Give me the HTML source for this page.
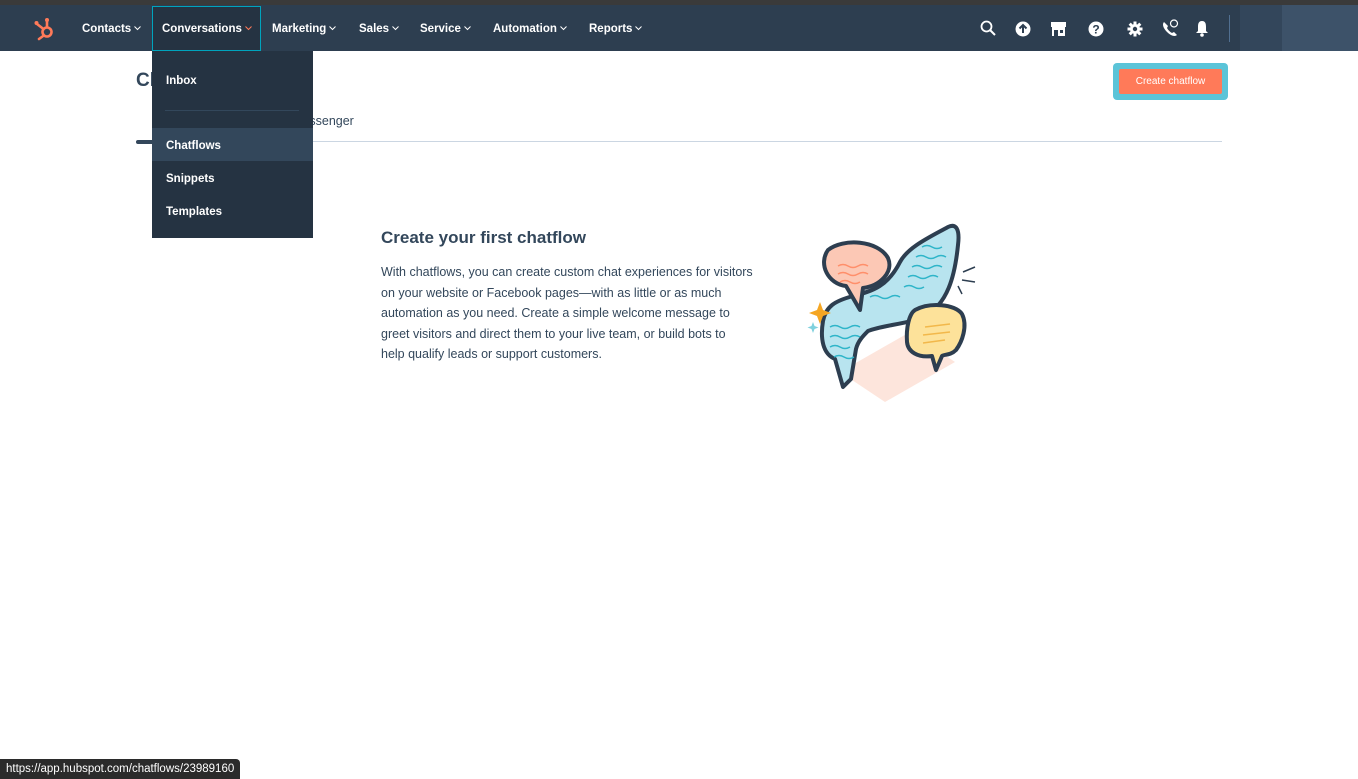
<!DOCTYPE html>
<html><head><meta charset="utf-8">
<style>
*{box-sizing:border-box;margin:0;padding:0}
body{width:1358px;height:779px;overflow:hidden;background:#fff;font-family:"Liberation Sans",sans-serif;color:#33475b;position:relative}
.top{position:absolute;left:0;top:0;width:1358px;height:5px;background:#3a3a3a}
.nav{position:absolute;left:0;top:5px;width:1358px;height:46px;background:#2d3e50}
.nav .r{position:absolute;left:1240px;top:0;width:118px;height:46px;background:#33465b}
.nav .r2{position:absolute;left:1282px;top:0;width:76px;height:46px;background:#3d5269}
.item{position:absolute;top:0;height:46px;line-height:49px;color:#fff;font-size:11.5px;font-weight:bold;white-space:nowrap}
.item svg{margin-left:3px;vertical-align:middle}
.conv{position:absolute;left:152px;top:6px;width:109px;height:45px;border:1.5px solid #00a4bd;background:#253342}
.menu{position:absolute;left:152px;top:51px;width:161px;height:187px;background:#253342}
.menu div{position:absolute;left:14px;color:#fff;font-size:11.5px;font-weight:bold}
.icon{position:absolute}
.btnwrap{position:absolute;left:1113px;top:63px;width:115px;height:37px;background:#5bc4d8;border-radius:4px}
.btn{position:absolute;left:1119px;top:69px;width:103px;height:25px;background:#ff7a59;color:#fff;font-size:10px;text-align:center;line-height:25px;border-radius:2px}
h2{position:absolute;left:381px;top:228px;font-size:17px;font-weight:bold;color:#33475b}
p.d{position:absolute;left:381px;top:262px;font-size:12.5px;line-height:20.5px;color:#33475b;white-space:nowrap}
.status{position:absolute;left:0;top:759px;height:20px;padding:0 6px;background:#2b2b2b;color:#fff;font-size:11.5px;line-height:20px;border-top-right-radius:4px}
</style></head><body>
<div class="top"></div>
<div class="nav"><div class="r"></div><div class="r2"></div>
<svg style="position:absolute;left:33px;top:10px" width="24" height="28" viewBox="0 0 24 28"><g stroke="#ff7a59" stroke-width="2.6" fill="none" stroke-linecap="round"><circle cx="14" cy="17" r="4.5"/><line x1="14" y1="12" x2="14" y2="6"/><line x1="10.5" y1="14" x2="4" y2="9"/><line x1="10.8" y1="20.5" x2="6" y2="24"/></g><circle cx="14" cy="5" r="2" fill="#ff7a59"/><circle cx="3.5" cy="8" r="2" fill="#ff7a59"/></svg>
<div class="item" style="left:82px">Contacts<svg width="7" height="5"><path d="M.5.5L3.5 3.5 6.5.5" stroke="#fff" fill="none"/></svg></div>
<div class="item" style="left:272px">Marketing<svg width="7" height="5"><path d="M.5.5L3.5 3.5 6.5.5" stroke="#fff" fill="none"/></svg></div>
<div class="item" style="left:359px">Sales<svg width="7" height="5"><path d="M.5.5L3.5 3.5 6.5.5" stroke="#fff" fill="none"/></svg></div>
<div class="item" style="left:420px">Service<svg width="7" height="5"><path d="M.5.5L3.5 3.5 6.5.5" stroke="#fff" fill="none"/></svg></div>
<div class="item" style="left:493px">Automation<svg width="7" height="5"><path d="M.5.5L3.5 3.5 6.5.5" stroke="#fff" fill="none"/></svg></div>
<div class="item" style="left:589px">Reports<svg width="7" height="5"><path d="M.5.5L3.5 3.5 6.5.5" stroke="#fff" fill="none"/></svg></div>
<svg class="icon" style="left:980px;top:15px" width="16" height="16"><circle cx="6.5" cy="6.5" r="5" stroke="#fff" stroke-width="1.8" fill="none"/><line x1="10" y1="10" x2="15" y2="15" stroke="#fff" stroke-width="2"/></svg>
<svg class="icon" style="left:1015px;top:16px" width="16" height="16"><circle cx="8" cy="8" r="7.5" fill="#fff"/><path d="M8 12V4M4.5 7.5L8 4l3.5 3.5" stroke="#2d3e50" stroke-width="2" fill="none"/></svg>
<svg class="icon" style="left:1050px;top:16px" width="17" height="16"><rect x="1" y="1" width="15" height="5" fill="#fff"/><rect x="2" y="6" width="13" height="9" fill="#fff"/><rect x="4" y="9" width="4" height="6" fill="#2d3e50"/><rect x="10" y="9" width="3" height="3" fill="#2d3e50"/></svg>
<svg class="icon" style="left:1088px;top:16px" width="16" height="16"><circle cx="8" cy="8" r="7.5" fill="#fff"/><text x="8" y="12.5" text-anchor="middle" font-size="12" font-weight="bold" fill="#2d3e50" font-family="Liberation Sans">?</text></svg>
<svg class="icon" style="left:1127px;top:16px" width="16" height="16" viewBox="0 0 16 16"><g stroke="#fff" stroke-width="3" stroke-linecap="butt"><line x1="8" y1="0.5" x2="8" y2="15.5"/><line x1="0.5" y1="8" x2="15.5" y2="8"/><line x1="2.7" y1="2.7" x2="13.3" y2="13.3"/><line x1="13.3" y1="2.7" x2="2.7" y2="13.3"/></g><circle cx="8" cy="8" r="5" fill="#fff"/><circle cx="8" cy="8" r="2.2" fill="#2d3e50"/></svg>
<svg class="icon" style="left:1161px;top:14px" width="18" height="18" viewBox="0 0 18 18"><path d="M3 3c-2 2-1 6 3 10s8 5 10 3l-3-3-2 1c-2-1-4-3-5-5l1-2z" fill="#fff"/><circle cx="13" cy="4.5" r="3.5" stroke="#fff" stroke-width="1.2" fill="none"/></svg>
<svg class="icon" style="left:1195px;top:15px" width="14" height="17"><path d="M7 1C3.5 1 3 4 3 7v4L1 13h12l-2-2V7c0-3-.5-6-4-6z" fill="#fff"/><circle cx="7" cy="15" r="1.8" fill="#fff"/></svg>
<div style="position:absolute;left:1229px;top:10px;width:1px;height:27px;background:#516f90"></div>
</div>
<div class="conv"></div>
<div class="item" style="left:162px;top:5px">Conversations<svg width="7" height="5"><path d="M.5.5L3.5 3.5 6.5.5" stroke="#ff7a59" fill="none"/></svg></div>

<div style="position:absolute;left:136px;top:70px;font-size:19px;font-weight:bold">Chatflows</div>
<div style="position:absolute;left:292px;top:114px;font-size:12.5px">Messenger</div>
<div style="position:absolute;left:136px;top:141px;width:1086px;height:1px;background:#cbd6e2"></div>
<div style="position:absolute;left:136px;top:140px;width:40px;height:4px;background:#33475b;border-radius:2px"></div>

<div class="menu">
<div style="top:24px">Inbox</div>
<div style="left:13px;top:59px;width:134px;height:1px;background:#33475b"></div>
<div style="left:0;top:77px;width:161px;height:33px;background:#33475b"></div>
<div style="top:89px">Chatflows</div>
<div style="top:122px">Snippets</div>
<div style="top:155px">Templates</div>
</div>

<div class="btnwrap"></div><div class="btn">Create chatflow</div>

<h2>Create your first chatflow</h2>
<p class="d">With chatflows, you can create custom chat experiences for visitors<br>on your website or Facebook pages—with as little or as much<br>automation as you need. Create a simple welcome message to<br>greet visitors and direct them to your live team, or build bots to<br>help qualify leads or support customers.</p>

<svg style="position:absolute;left:800px;top:222px" width="185" height="185" viewBox="0 0 185 185">
<path d="M40 150l45 30 70-40-45-30z" fill="#fde5dc"/>
<path d="M100 40c8-15 30-25 48-35 8-4 12 2 10 18-3 30-10 60-35 72-15 7-40 8-55 14-5 5-10 10-12 18l-5 30-8 8-8-28c-12-5-15-20-12-38 3-15 12-20 30-25 20-5 35-10 47-34z" fill="#b8e4ef" stroke="#2d3e50" stroke-width="4" stroke-linejoin="round"/>
<path d="M28 28c15-12 50-10 60 8 6 14-8 28-25 30l-3 22-14-24c-18-2-28-22-18-36z" fill="#fcc8b5" stroke="#2d3e50" stroke-width="4" stroke-linejoin="round"/>
<path d="M115 88c15-8 40-6 47 4 6 12 0 28-6 36-6 6-12 4-14 6l-6 14-4-14c-14 2-24-4-25-14-1-14 2-28 8-32z" fill="#fde29a" stroke="#2d3e50" stroke-width="4" stroke-linejoin="round"/>
<g stroke="#ff8f6b" stroke-width="1.5" fill="none"><path d="M38 44q5-3 10 0t10 0 10 0"/><path d="M38 52q5-3 10 0t10 0 10 0"/><path d="M40 60q5-3 10 0t10 0"/></g>
<g stroke="#2fb5c9" stroke-width="1.5" fill="none"><path d="M122 25q5-3 10 0t10 0"/><path d="M116 35q5-3 10 0t10 0 10 0"/><path d="M112 45q5-3 10 0t10 0 10 0"/><path d="M108 55q5-3 10 0t10 0 10 0"/><path d="M104 65q5-3 10 0t10 0"/><path d="M70 75q5-3 10 0t10 0 10 0"/><path d="M30 105q5-3 10 0t10 0 10 0"/><path d="M30 115q5-3 10 0t10 0 10 0"/><path d="M30 125q5-3 10 0t10 0"/><path d="M34 135q5-3 10 0t10 0"/></g>
<g stroke="#f2b84b" stroke-width="1.5"><line x1="125" y1="105" x2="150" y2="102"/><line x1="123" y1="113" x2="150" y2="110"/><line x1="123" y1="121" x2="145" y2="118"/></g>
<path d="M20 80l3 8 8 3-8 3-3 8-3-8-8-3 8-3z" fill="#f5a623"/>
<path d="M13 100l1.5 4 4 1.5-4 1.5-1.5 4-1.5-4-4-1.5 4-1.5z" fill="#7fd1de"/>
<g stroke="#2d3e50" stroke-width="1.5"><line x1="163" y1="50" x2="175" y2="45"/><line x1="162" y1="58" x2="175" y2="60"/><line x1="158" y1="64" x2="162" y2="72"/></g>
</svg>

<div class="status">https://app.hubspot.com/chatflows/23989160</div>
</body></html>
